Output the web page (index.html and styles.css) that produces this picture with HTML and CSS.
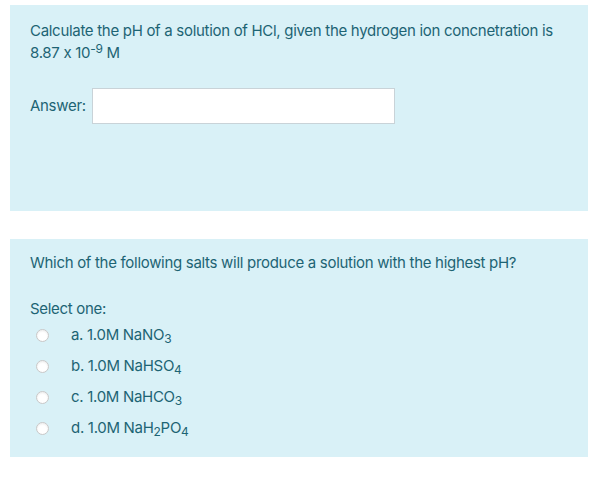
FILE: index.html
```html
<!DOCTYPE html>
<html lang="en">
<head>
  <meta charset="UTF-8">
  <title>Quiz</title>
  <link rel="stylesheet" href="styles.css">
</head>
<body>
<div class="que">
  <div class="formulation formulation-short">
    <p class="qtext">Calculate the pH of a solution of HCl, given the hydrogen ion concnetration is 8.87 x 10<sup>-9</sup> M</p>
    <div class="ablock">
      <label class="answer-label" for="ans1">Answer:</label>
      <input class="answer-input" type="text" id="ans1">
    </div>
  </div>
</div>
<div class="que">
  <div class="formulation formulation-choice">
    <p class="qtext">Which of the following salts will produce a solution with the highest pH?</p>
    <p class="prompt">Select one:</p>
    <div class="options">
      <label class="option"><span class="radio"></span><span>a. 1.0M NaNO<sub>3</sub></span></label>
      <label class="option"><span class="radio"></span><span>b. 1.0M NaHSO<sub>4</sub></span></label>
      <label class="option"><span class="radio"></span><span>c. 1.0M NaHCO<sub>3</sub></span></label>
      <label class="option"><span class="radio"></span><span>d. 1.0M NaH<sub>2</sub>PO<sub>4</sub></span></label>
    </div>
  </div>
</div>
</body>
</html>
```

FILE: styles.css
```css
* {
  margin: 0;
  padding: 0;
  box-sizing: border-box;
}

body {
  padding: 5px 14px 0 10px;
  font-family: Inter, "Liberation Sans", sans-serif;
  font-feature-settings: "calt" 0;
  font-size: 15px;
  letter-spacing: -0.3px;
  line-height: 22px;
  color: #1d6474;
  background-color: #fff;
}

.que {
  margin-bottom: 28px;
}

.formulation {
  background-color: #d9f1f7;
  padding: 15px 20px 20px 20px;
}

.formulation-short {
  height: 206px;
}

.formulation-choice {
  height: 218px;
  padding-top: 13px;
}

sup {
  font-size: 12px;
  line-height: 0;
  vertical-align: 5px;
}

sub {
  font-size: 12px;
  line-height: 0;
  vertical-align: -3px;
}

.ablock {
  display: flex;
  align-items: center;
  gap: 6px;
  margin-top: 24px;
}

.answer-input {
  width: 303px;
  height: 36px;
  border: 1px solid #c9d3d8;
  background-color: #fff;
}

.prompt {
  margin-top: 24px;
}

.options {
  display: flex;
  flex-direction: column;
  gap: 9px;
  margin-top: 4px;
}

.option {
  display: flex;
  align-items: center;
  height: 22px;
}

.radio {
  width: 13px;
  height: 13px;
  border-radius: 50%;
  border: 1px solid #c8c8c8;
  background-color: #fff;
  margin: 0 22px 0 6px;
  box-shadow: inset 0 1px 2px rgba(0, 0, 0, 0.08);
}
```
